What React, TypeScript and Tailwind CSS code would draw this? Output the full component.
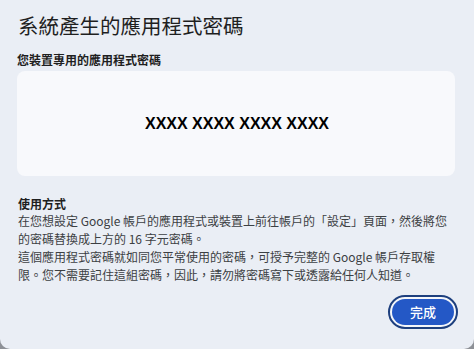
import React from "react";

const cjk = '"Noto Sans CJK TC", "Noto Sans", sans-serif';

export default function App() {
  return (
    <div className="w-[474px] h-[349px] bg-[#8e9197] overflow-hidden">
      <div
        className="w-[474px] h-[349px] bg-[#eaeef5] rounded-b-[10px] flex flex-col pl-[18px] pr-[19px]"
        style={{ fontFamily: cjk }}
      >
        <h1 className="text-[20.5px] leading-[26px] text-[#1f1f1f] mt-[12px] font-normal tracking-[0px]">
          系統產生的應用程式密碼
        </h1>
        <div className="mt-[14px] text-[12px] leading-[16px] font-bold text-[#1f1f1f] -ml-[1px]">
          您裝置專用的應用程式密碼
        </div>
        <div className="mt-[3px] -ml-[1px] h-[105px] rounded-[8px] bg-[#f8f9fc] flex items-center justify-center">
          <span
            className="text-[16px] font-bold text-black leading-[20px] pl-[2px]"
            style={{ fontFamily: '"Liberation Sans", Arial, sans-serif' }}
          >
            XXXX XXXX XXXX XXXX
          </span>
        </div>
        <div className="mt-[19px] text-[12px] leading-[18px] font-bold text-[#1f1f1f]">使用方式</div>
        <div className="text-[12px] leading-[18px] text-[#3c4043] -mt-[1px]">
          <p>在您想設定 Google 帳戶的應用程式或裝置上前往帳戶的「設定」頁面，然後將您的密碼替換成上方的 16 字元密碼。</p>
          <p>這個應用程式密碼就如同您平常使用的密碼，可授予完整的 Google 帳戶存取權限。您不需要記住這組密碼，因此，請勿將密碼寫下或透露給任何人知道。</p>
        </div>
        <div className="flex justify-end mt-[15px] pr-[1px]">
          <button className="w-[62px] h-[26px] rounded-full bg-[#2458c6] text-white text-[13px] leading-[26px] font-medium outline-2 outline-offset-2 outline-[#1d3f7e] shadow-[0_0_0_2px_#f4f6fa]">
            完成
          </button>
        </div>
      </div>
    </div>
  );
}
